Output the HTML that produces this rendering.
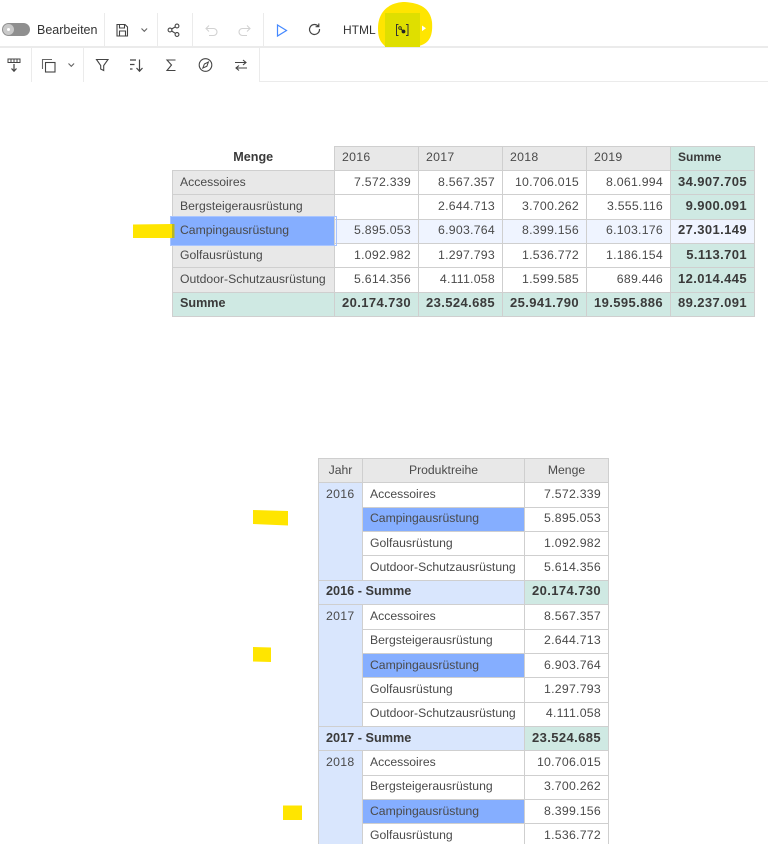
<!DOCTYPE html>
<html lang="de"><head><meta charset="utf-8"><title>Bericht</title>
<style>
html,body{margin:0;padding:0;background:#fff}
body{width:768px;height:844px;overflow:hidden;position:relative;font-family:"Liberation Sans",sans-serif;color:#4a4a4a}
#w{position:absolute;left:0;top:0;width:768px;height:844px;overflow:hidden;filter:blur(.3px)}
.abs{position:absolute}
table{position:absolute;border-collapse:collapse;table-layout:fixed;font-size:12.2px}
td{border:1px solid #cfcfcf;padding:0 7px 2px;height:24.36px;box-sizing:border-box;white-space:nowrap;overflow:hidden;background:#fff;line-height:14px}
td.n{text-align:right;font-size:12.3px;letter-spacing:.25px}
td.h{background:#e8e8e8}
td.yr{letter-spacing:.3px;font-size:12.3px}
td.c{text-align:center}
td.s{background:#cfe9e3;font-weight:bold;color:#3a3a3a;font-size:12.6px}
td.sn{background:#cfe9e3;font-weight:bold;color:#3a3a3a;text-align:right;font-size:13px;letter-spacing:.4px}
td.b{background:#85aeff}
td.l{background:#eff4ff}
td.lb{background:#eff4ff;font-weight:bold;color:#3a3a3a;text-align:right;font-size:13px;letter-spacing:.4px}
td.y{background:#d9e6fd;vertical-align:top;padding-top:4px;letter-spacing:.3px;font-size:12.3px}
td.ys{background:#d9e6fd;font-weight:bold;color:#3a3a3a;font-size:12.7px}
td.m{border:none;background:#fff;font-weight:bold;color:#3a3a3a;text-align:center;font-size:12.6px}
svg{position:absolute;overflow:visible}
.line{position:absolute;background:#ebebeb}
.t{position:absolute;color:#333;line-height:16px;white-space:nowrap}
</style></head><body><div id="w">

<div class="line" style="left:0;top:46px;width:768px;height:2px"></div>
<div class="line" style="left:259px;top:81px;width:509px;height:1px"></div>
<div class="line" style="left:104px;top:13px;width:1px;height:33px"></div>
<div class="line" style="left:157px;top:13px;width:1px;height:33px"></div>
<div class="line" style="left:192px;top:13px;width:1px;height:33px"></div>
<div class="line" style="left:263px;top:13px;width:1px;height:33px"></div>
<div class="line" style="left:31px;top:48px;width:1px;height:34px"></div>
<div class="line" style="left:83px;top:48px;width:1px;height:34px"></div>
<div class="line" style="left:259px;top:48px;width:1px;height:34px"></div>

<div class="abs" style="left:2px;top:23px;width:28px;height:13px;border-radius:7px;background:#8f8f8f"></div>
<div class="abs" style="left:3px;top:24px;width:11px;height:11px;border-radius:50%;background:#c9c9c9"></div>
<div class="abs" style="left:7px;top:28px;width:3px;height:3px;border-radius:50%;background:#fff"></div>
<div class="t" style="left:37px;top:22px;font-size:12.5px">Bearbeiten</div>

<svg style="left:0;top:0" width="768" height="90" fill="none" stroke="#444" stroke-width="1.1">
<path d="M117 24.5h8l2.5 2.5v9h-10.500z M119.500 24.500v3.500h5v-3.500 M119.500 35.500v-4.500h6v4.500"/>
<path d="M141.500 28.500l2.800 2.800 2.800-2.800" stroke="#666"/>
<circle cx="170" cy="30" r="1.900"/><circle cx="177" cy="26" r="1.900"/><circle cx="177" cy="34.500" r="1.900"/><path d="M171.700 29l3.600-2.100M171.700 31l3.600 2.300"/>
<path d="M209 25.500l-3 3 3 3M206 28.500h7.500a3.500 3.500 0 0 1 0 7H209" stroke="#d2d2d2"/>
<path d="M247 25.500l3 3-3 3M250 28.500h-7.500a3.500 3.500 0 0 0 0 7h4.500" stroke="#d2d2d2"/>
<path d="M277.500 25l9 5.500-9 5.500z" stroke="#4589ff" stroke-width="1.200"/>
<path d="M319.500 29a5 5 0 1 1-1.200-2.800M318.800 23.500v3.200h-3.200" stroke-width="1.200"/>
<path d="M8 59h12v3.500H8zM11 59v3.500M14 59v3.500M17 59v3.500" stroke-width="1"/>
<path d="M14 64v7M11.500 68.500l2.500 2.700 2.500-2.700" stroke-width="1.200"/>
<path d="M42.500 69V59.500H52" stroke="#666"/><rect x="45.500" y="62.500" width="9.500" height="9.500" stroke="#444"/>
<path d="M68.500 63.500l2.800 2.800 2.800-2.800" stroke="#666"/>
<path d="M96.500 59.500h11.500l-4.300 6v5l-3-1.500v-3.500z"/>
<path d="M130 60h6M130 64.500h4.500M130 69h2.500M139.500 59.500v11.500M136.500 68l3 3.200 3-3.200" stroke-width="1.200"/>
<path d="M175.500 60h-8.500l4.500 5-4.500 5.500h8.500" stroke-width="1.100"/>
<circle cx="205.500" cy="65" r="6.300" stroke-width="1.100"/><path d="M202.800 68l1.600-4 4-2-1.500 4.200z" stroke-width="1"/>
<path d="M235 62.500h11M243 60l3 2.500-3 2.500M247 68h-11M239 65.500l-3 2.500 3 2.500" stroke-width="1.100"/>
</svg>

<div class="t" style="left:343px;top:22px;font-size:12px">HTML</div>

<table style="left:172px;top:145.500px;width:582px">
<colgroup><col style="width:162px"><col style="width:84px"><col style="width:84px"><col style="width:84px"><col style="width:84px"><col style="width:84px"></colgroup>
<tr><td class="m">Menge</td><td class="h yr">2016</td><td class="h yr">2017</td><td class="h yr">2018</td><td class="h yr">2019</td><td class="s" style="font-size:12px">Summe</td></tr>
<tr><td class="h">Accessoires</td><td class="n">7.572.339</td><td class="n">8.567.357</td><td class="n">10.706.015</td><td class="n">8.061.994</td><td class="sn">34.907.705</td></tr>
<tr><td class="h">Bergsteigerausrüstung</td><td class="n"></td><td class="n">2.644.713</td><td class="n">3.700.262</td><td class="n">3.555.116</td><td class="sn">9.900.091</td></tr>
<tr><td class="b"></td><td class="n l">5.895.053</td><td class="n l">6.903.764</td><td class="n l">8.399.156</td><td class="n l">6.103.176</td><td class="lb">27.301.149</td></tr>
<tr><td class="h">Golfausrüstung</td><td class="n">1.092.982</td><td class="n">1.297.793</td><td class="n">1.536.772</td><td class="n">1.186.154</td><td class="sn">5.113.701</td></tr>
<tr><td class="h">Outdoor-Schutzausrüstung</td><td class="n">5.614.356</td><td class="n">4.111.058</td><td class="n">1.599.585</td><td class="n">689.446</td><td class="sn">12.014.445</td></tr>
<tr><td class="s">Summe</td><td class="sn">20.174.730</td><td class="sn">23.524.685</td><td class="sn">25.941.790</td><td class="sn">19.595.886</td><td class="sn">89.237.091</td></tr>
</table>
<div class="abs" style="left:170px;top:216px;width:165px;height:28px;border:1px solid #a9c5ff;font-size:12.2px;line-height:28px"><div class="abs" style="left:0;top:0;width:163px;height:28px;background:#85aeff;padding-left:9px;box-sizing:border-box;white-space:nowrap;line-height:27px">Campingausrüstung</div></div>

<table style="left:318px;top:458px;width:290px">
<colgroup><col style="width:44px"><col style="width:162px"><col style="width:84px"></colgroup>
<tr><td class="h c">Jahr</td><td class="h c">Produktreihe</td><td class="h c">Menge</td></tr>
<tr><td class="y" rowspan="4">2016</td><td>Accessoires</td><td class="n">7.572.339</td></tr>
<tr><td class="b">Campingausrüstung</td><td class="n">5.895.053</td></tr>
<tr><td>Golfausrüstung</td><td class="n">1.092.982</td></tr>
<tr><td>Outdoor-Schutzausrüstung</td><td class="n">5.614.356</td></tr>
<tr><td class="ys" colspan="2">2016 - Summe</td><td class="sn">20.174.730</td></tr>
<tr><td class="y" rowspan="5">2017</td><td>Accessoires</td><td class="n">8.567.357</td></tr>
<tr><td>Bergsteigerausrüstung</td><td class="n">2.644.713</td></tr>
<tr><td class="b">Campingausrüstung</td><td class="n">6.903.764</td></tr>
<tr><td>Golfausrüstung</td><td class="n">1.297.793</td></tr>
<tr><td>Outdoor-Schutzausrüstung</td><td class="n">4.111.058</td></tr>
<tr><td class="ys" colspan="2">2017 - Summe</td><td class="sn">23.524.685</td></tr>
<tr><td class="y" rowspan="5">2018</td><td>Accessoires</td><td class="n">10.706.015</td></tr>
<tr><td>Bergsteigerausrüstung</td><td class="n">3.700.262</td></tr>
<tr><td class="b">Campingausrüstung</td><td class="n">8.399.156</td></tr>
<tr><td>Golfausrüstung</td><td class="n">1.536.772</td></tr>
<tr><td>Outdoor-Schutzausrüstung</td><td class="n">1.599.585</td></tr>
</table>

<svg style="left:0;top:0" width="768" height="844">
<path d="M378 28C378 11 390 2 405 2C420 3 430 8 432 22C433 36 430 46 412 47H386C380 42 378 38 378 28z" fill="#ffe500"/>
<rect x="385" y="13" width="35" height="34" fill="#dfdf00"/>
<path d="M422 25.500l4 2.800-4 2.800z" fill="#fff"/>
<path d="M398.500 24.500h-2v11h2M406 24.500h2v11h-2" fill="none" stroke="#333" stroke-width="1"/>
<circle cx="400" cy="28" r="1.300" fill="none" stroke="#222" stroke-width=".8"/><circle cx="403.500" cy="31.500" r="1.900" fill="#222"/><path d="M401 29l1.500 1.500" stroke="#222"/>
<path d="M133 224.500L172 224V238L133 238z" fill="#ffe500"/>
<rect x="172" y="224" width="2.500" height="14" fill="#b8b820"/>
<path d="M253 510L288 511V525.500L253 524z" fill="#ffe500"/>
<path d="M253 647L271 647.500V662L253 661.500z" fill="#ffe500"/>
<rect x="283" y="805.500" width="19" height="14.500" fill="#ffe500"/>
</svg>
</div></body></html>
